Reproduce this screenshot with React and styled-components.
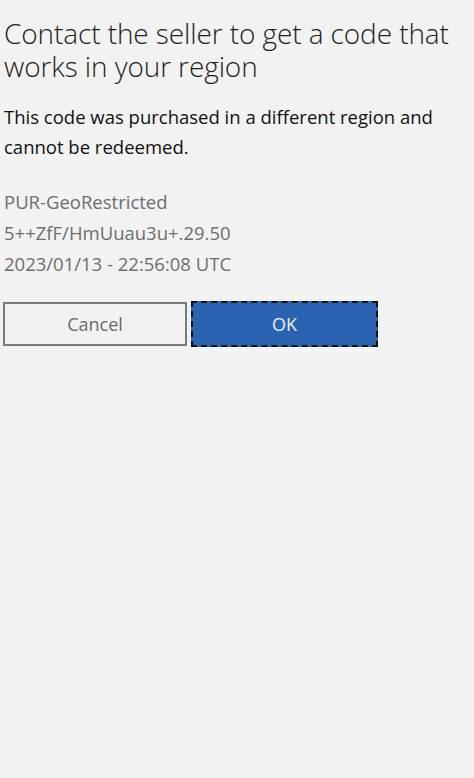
import React from 'react';
import styled, { createGlobalStyle } from 'styled-components';

const GlobalStyle = createGlobalStyle`
  html, body {
    margin: 0;
    padding: 0;
    background: #f2f2f2;
  }
  body {
    font-family: 'Open Sans', 'Noto Sans', 'Liberation Sans', sans-serif;
  }
`;

const details = [
  'PUR-GeoRestricted',
  '5++ZfF/HmUuau3u+.29.50',
  '2023/01/13 - 22:56:08 UTC',
];

function App() {
  return (
    <Page>
      <GlobalStyle />
      <Title>Contact the seller to get a code that works in your region</Title>
      <Message>
        This code was purchased in a different region and cannot be redeemed.
      </Message>
      <Details>
        {details.map((line) => (
          <DetailLine key={line}>{line}</DetailLine>
        ))}
      </Details>
      <ButtonRow>
        <Button>Cancel</Button>
        <Button primary>OK</Button>
      </ButtonRow>
    </Page>
  );
}

export default App;

const Page = styled.div`
  width: 474px;
  min-height: 778px;
  box-sizing: border-box;
  padding: 17px 0 0 4px;
  background: #f2f2f2;
  color: #1a1a1a;
`;

const Title = styled.h1`
  margin: 0;
  width: 460px;
  font-size: 28px;
  font-weight: 300;
  line-height: 33px;
  letter-spacing: -0.1px;
  color: #1f1f1f;
`;

const Message = styled.p`
  margin: 19px 0 0;
  width: 460px;
  font-size: 18.5px;
  font-weight: 400;
  line-height: 30px;
  color: #111;
`;

const Details = styled.div`
  margin-top: 24px;
  display: flex;
  flex-direction: column;
`;

const DetailLine = styled.div`
  font-size: 18.5px;
  line-height: 31px;
  color: #6e6e6e;
`;

const ButtonRow = styled.div`
  margin-top: 23px;
  display: flex;
  gap: 4px;
  margin-left: -1px;
`;

const Button = styled.button`
  box-sizing: border-box;
  width: ${(p) => (p.primary ? '187px' : '184px')};
  height: ${(p) => (p.primary ? '46px' : '44px')};
  margin-top: ${(p) => (p.primary ? '-1px' : '0')};
  font-family: inherit;
  font-size: 18px;
  padding: 0;
  cursor: pointer;
  background: ${(p) => (p.primary ? '#2b63b3' : '#f2f2f2')};
  color: ${(p) => (p.primary ? '#e9eef7' : '#6a6a6a')};
  border: ${(p) => (p.primary ? '2px dashed #111' : '2px solid #7a7a7a')};
`;
